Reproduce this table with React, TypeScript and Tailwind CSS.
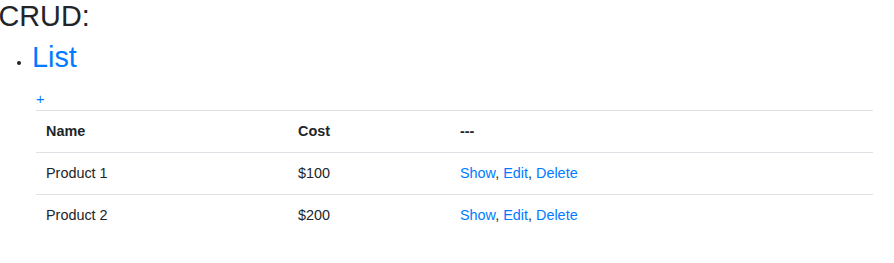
import React from "react";

const rows = [
  { name: "Product 1", cost: "$100" },
  { name: "Product 2", cost: "$200" },
];

export default function App() {
  return (
    <div className="font-['Liberation_Sans',Arial,sans-serif] text-[14.4px] leading-[21px] text-[#212529] bg-white min-h-[263px]">
      <h3 className="text-[28.8px] leading-[1.2] font-normal ml-[-1.5px] mt-[-1px] mb-[6px]">CRUD:</h3>
      <ul className="list-disc pl-8 m-0">
        <li>
          <h3 className="text-[28.8px] leading-[1.2] font-normal">
            <a href="#" className="text-[#007bff]">List</a>
          </h3>
          <div className="pl-1 mt-[15px]">
            <div className="leading-[21px]">
              <a href="#" className="text-[#007bff]">+</a>
            </div>
            <table className="w-[837px] border-collapse">
              <thead>
                <tr className="border-t border-[#dee2e6]">
                  <th className="w-[252px] text-left font-bold px-[10px] py-[10px]">Name</th>
                  <th className="w-[162px] text-left font-bold px-[10px] py-[10px]">Cost</th>
                  <th className="text-left font-bold px-[10px] py-[10px]">---</th>
                </tr>
              </thead>
              <tbody>
                {rows.map((r) => (
                  <tr key={r.name} className="border-t border-[#dee2e6]">
                    <td className="px-[10px] py-[10px]">{r.name}</td>
                    <td className="px-[10px] py-[10px]">{r.cost}</td>
                    <td className="px-[10px] py-[10px]">
                      <a href="#" className="text-[#007bff]">Show</a>,{" "}
                      <a href="#" className="text-[#007bff]">Edit</a>,{" "}
                      <a href="#" className="text-[#007bff]">Delete</a>
                    </td>
                  </tr>
                ))}
              </tbody>
            </table>
          </div>
        </li>
      </ul>
    </div>
  );
}
